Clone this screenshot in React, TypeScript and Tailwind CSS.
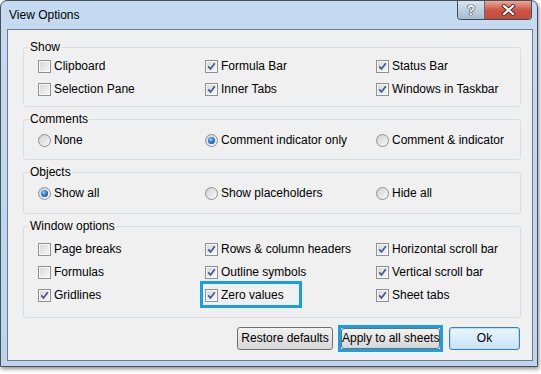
import type { ReactNode } from 'react';

function CheckBox({ checked }: { checked?: boolean }) {
  return (
    <span className="w-[13px] h-[13px] shrink-0 border border-[#8e8f8f] bg-[#f4f4f4] flex items-center justify-center">
      <span className="w-[11px] h-[11px] border border-[#f8f8f8] bg-gradient-to-br from-[#d8d8d8] to-[#f6f6f6] flex items-center justify-center">
        {checked && (
          <svg width="9" height="9" viewBox="0 0 9 9">
            <path d="M1.2 4.4 L3.5 6.9 L7.8 1.2" fill="none" stroke="#3c5a99" strokeWidth="1.7" />
          </svg>
        )}
      </span>
    </span>
  );
}

function Radio({ checked }: { checked?: boolean }) {
  return (
    <span className="w-[13px] h-[13px] shrink-0 rounded-full border border-[#8e8f8f] bg-gradient-to-br from-[#d0d0d0] to-[#fafafa] flex items-center justify-center">
      {checked && (
        <span className="w-[7px] h-[7px] rounded-full bg-[radial-gradient(circle_at_40%_35%,#9fd5ff_0%,#2a7ad0_45%,#0b3f86_100%)]" />
      )}
    </span>
  );
}

function Item({ children, label }: { children: ReactNode; label: string }) {
  return (
    <div className="h-[17px] flex items-center gap-[3px]">
      {children}
      <span className="leading-[15px] whitespace-nowrap">{label}</span>
    </div>
  );
}

function Group({ title, children, className }: { title: string; children: ReactNode; className: string }) {
  return (
    <fieldset className="border border-[#d5dfe5] rounded-[3px]">
      <legend className="ml-[5px] px-[1px] leading-[15px]">{title}</legend>
      <div className={'grid grid-cols-[167px_171px_1fr] pl-[14px] gap-y-[6px] ' + className}>{children}</div>
    </fieldset>
  );
}

export default function App() {
  return (
    <div className="w-[541px] h-[374px] bg-white font-['Liberation_Sans',Arial,sans-serif] text-[12px] text-black">
      <div className="w-[538px] h-[367px] rounded-t-[7px] border border-[#4a4f55] bg-gradient-to-b from-[#c4dbf2] to-[#bcd4ee] flex flex-col pl-[6px] pr-[4px] pb-[5px] shadow-[1px_2px_4px_rgba(0,0,0,0.45)]">
        <div className="h-[28px] flex items-start justify-between">
          <span className="pl-[2px] pt-[7px] leading-[15px]">View Options</span>
          <div className="flex mr-[1px] h-[19px] border border-t-0 border-[#3e4d5e] rounded-b-[4px] overflow-hidden">
            <span className="w-[27px] flex items-center justify-center bg-gradient-to-b from-[#d7e3ef] to-[#a9bbd0] border-r border-[#5b6b7c] text-white font-bold text-[14px] leading-none [text-shadow:0_0_1px_#222,0_0_1px_#222,0_0_1px_#222]">
              ?
            </span>
            <span className="w-[46px] flex items-center justify-center bg-gradient-to-b from-[#e9a99a] via-[#cf5343] to-[#c44b3a]">
              <svg width="15" height="12" viewBox="0 0 15 12">
                <path d="M3 2 L12 10 M12 2 L3 10" stroke="#3a2a28" strokeWidth="4" strokeLinecap="square" />
                <path d="M3 2 L12 10 M12 2 L3 10" stroke="#ffffff" strokeWidth="2.2" strokeLinecap="square" />
              </svg>
            </span>
          </div>
        </div>
        <div className="flex-1 border border-[#6e7d8c] bg-[#f0f0f0] pt-[10px] pl-[15px] pr-[11px] flex flex-col gap-[5px]">
          <Group title="Show" className="pt-[3px] pb-[8px]">
            <Item label="Clipboard"><CheckBox /></Item>
            <Item label="Formula Bar"><CheckBox checked /></Item>
            <Item label="Status Bar"><CheckBox checked /></Item>
            <Item label="Selection Pane"><CheckBox /></Item>
            <Item label="Inner Tabs"><CheckBox checked /></Item>
            <Item label="Windows in Taskbar"><CheckBox checked /></Item>
          </Group>
          <Group title="Comments" className="pt-[5px] pb-[10px]">
            <Item label="None"><Radio /></Item>
            <Item label="Comment indicator only"><Radio checked /></Item>
            <Item label="Comment & indicator"><Radio /></Item>
          </Group>
          <Group title="Objects" className="pt-[5px] pb-[11px]">
            <Item label="Show all"><Radio checked /></Item>
            <Item label="Show placeholders"><Radio /></Item>
            <Item label="Hide all"><Radio /></Item>
          </Group>
          <Group title="Window options" className="pt-[7px] pb-[13px]">
            <Item label="Page breaks"><CheckBox /></Item>
            <Item label="Rows & column headers"><CheckBox checked /></Item>
            <Item label="Horizontal scroll bar"><CheckBox checked /></Item>
            <Item label="Formulas"><CheckBox /></Item>
            <Item label="Outline symbols"><CheckBox checked /></Item>
            <Item label="Vertical scroll bar"><CheckBox checked /></Item>
            <Item label="Gridlines"><CheckBox checked /></Item>
            <div className="relative">
              <Item label="Zero values"><CheckBox checked /></Item>
              <span className="absolute -left-[5px] -top-[6px] w-[102px] h-[27px] border-[3px] border-[#1aa0e2]" />
            </div>
            <Item label="Sheet tabs"><CheckBox checked /></Item>
          </Group>
          <div className="mt-[2px] flex items-center justify-end pr-[1px]">
            <button className="w-[96px] h-[23px] rounded-[3px] border border-[#707070] bg-gradient-to-b from-[#f2f2f2] to-[#d6d6d6] leading-[15px] whitespace-nowrap">
              Restore defaults
            </button>
            <div className="ml-[5px] border-[3px] border-[#1aa0e2]">
              <button className="w-[99px] h-[21px] rounded-[3px] border border-[#707070] bg-gradient-to-b from-[#f2f2f2] to-[#d6d6d6] leading-[15px] whitespace-nowrap block">
                Apply to all sheets
              </button>
            </div>
            <button className="ml-[6px] w-[71px] h-[23px] rounded-[3px] border border-[#3c7fb1] bg-gradient-to-b from-[#eaf6fd] to-[#c9e2f3] shadow-[inset_0_0_0_1px_#aee2f7] leading-[15px]">
              Ok
            </button>
          </div>
        </div>
      </div>
    </div>
  );
}
